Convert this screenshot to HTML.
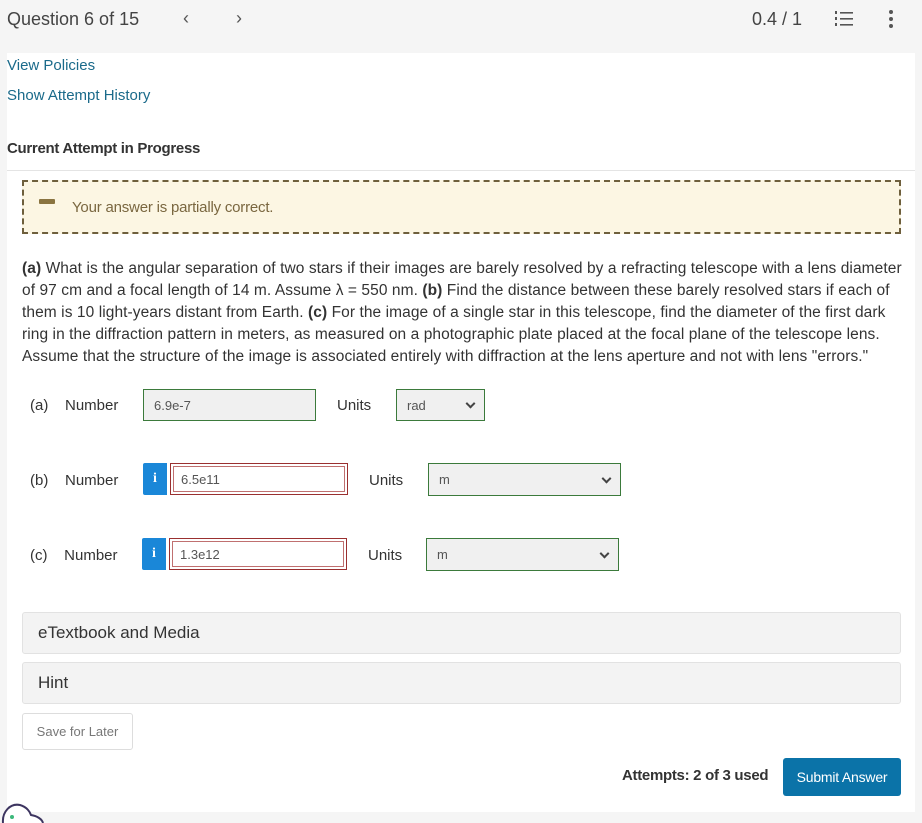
<!DOCTYPE html>
<html><head><meta charset="utf-8"><style>
*{box-sizing:border-box;margin:0;padding:0}
body{width:922px;height:823px;background:#f5f5f5;font-family:"Liberation Sans",sans-serif;color:#333;position:relative;overflow:hidden}
.top{position:absolute;left:0;top:0;width:922px;height:53px;background:#f5f5f5}
.main{position:absolute;left:7px;top:53px;width:908px;height:759px;background:#fff}
.abs{position:absolute;white-space:nowrap}
a{color:#1a6a8a}
.q{position:absolute;left:22px;top:258px;font-size:15.5px;line-height:22px;color:#333;letter-spacing:0.08px}
.q div{white-space:nowrap}
.box{position:absolute;border:1px solid #3b7a3b;background:#f0f0f0;font-size:13px;color:#555;padding-left:10px;display:flex;align-items:center}
.red{position:absolute;border:1px solid #9a3030;background:#fff;font-size:13px;color:#555;padding-left:10px;display:flex;align-items:center;box-shadow:inset 0 0 0 2px #fff,inset 0 0 0 3px #c07070}
.info{position:absolute;width:24px;height:32px;background:#1a87d8;color:#fff;font-weight:bold;font-family:"Liberation Serif",serif;font-size:14px;text-align:center;line-height:32px;border-radius:2px 0 0 2px}
.lbl{position:absolute;font-size:15px;color:#333;white-space:nowrap}
.acc{position:absolute;left:22px;width:879px;height:42px;background:#f3f3f3;border:1px solid #e2e2e2;border-radius:3px;font-size:17px;color:#333;padding:10px 0 0 15px}
.chev{position:absolute;right:10px;top:50%;width:7px;height:7px;border-right:2px solid #444;border-bottom:2px solid #444;transform:translateY(-70%) rotate(45deg)}
</style></head><body>
<div class="top">
<div class="abs" style="left:7px;top:9px;font-size:18px;color:#444">Question 6 of 15</div>
<div class="abs" style="left:183px;top:8px;font-size:18px;color:#555">&#8249;</div>
<div class="abs" style="left:236px;top:8px;font-size:18px;color:#555">&#8250;</div>
<div class="abs" style="left:752px;top:9px;font-size:18px;color:#444">0.4 / 1</div>
<svg class="abs" style="left:834px;top:10px" width="20" height="18"><g fill="#555"><rect x="6" y="2" width="13" height="1.6"/><rect x="6" y="8" width="13" height="1.6"/><rect x="6" y="14" width="13" height="1.6"/><rect x="1" y="1" width="2" height="3"/><rect x="1" y="7" width="2" height="3"/><rect x="1" y="13" width="2" height="3"/></g></svg>
<svg class="abs" style="left:887px;top:9px" width="8" height="20"><g fill="#555"><circle cx="4" cy="3" r="2"/><circle cx="4" cy="10" r="2"/><circle cx="4" cy="17" r="2"/></g></svg>
</div>
<div class="main"></div>
<div class="abs" style="left:7px;top:57px;font-size:15px"><a>View Policies</a></div>
<div class="abs" style="left:7px;top:87px;font-size:15px;color:#1a6a8a">Show Attempt History</div>
<div class="abs" style="left:7px;top:140px;font-size:15px;font-weight:bold;color:#333;letter-spacing:-0.3px">Current Attempt in Progress</div>
<div class="abs" style="left:7px;top:170px;width:908px;height:1px;background:#e4e4e4"></div>
<div class="abs" style="left:22px;top:180px;width:879px;height:54px;background:#fcf6e3;border:2px dashed #6e5f3c"></div>
<div class="abs" style="left:39px;top:199px;width:16px;height:5px;background:#8a7440;border-radius:1px"></div>
<div class="abs" style="left:72px;top:199px;font-size:15px;color:#7a6740;letter-spacing:-0.2px">Your answer is partially correct.</div>
<div class="q">
<div><b>(a)</b> What is the angular separation of two stars if their images are barely resolved by a refracting telescope with a lens diameter</div>
<div>of 97 cm and a focal length of 14 m. Assume λ = 550 nm. <b>(b)</b> Find the distance between these barely resolved stars if each of</div>
<div>them is 10 light-years distant from Earth. <b>(c)</b> For the image of a single star in this telescope, find the diameter of the first dark</div>
<div>ring in the diffraction pattern in meters, as measured on a photographic plate placed at the focal plane of the telescope lens.</div>
<div>Assume that the structure of the image is associated entirely with diffraction at the lens aperture and not with lens "errors."</div>
</div>
<div class="lbl" style="left:30px;top:397px">(a)&nbsp;&nbsp;&nbsp;&nbsp;Number</div>
<div class="box" style="left:143px;top:389px;width:173px;height:32px">6.9e-7</div>
<div class="lbl" style="left:337px;top:397px">Units</div>
<div class="box" style="left:396px;top:389px;width:89px;height:32px">rad<span class="chev"></span></div>
<div class="lbl" style="left:30px;top:472px">(b)&nbsp;&nbsp;&nbsp;&nbsp;Number</div>
<div class="info" style="left:143px;top:463px">i</div>
<div class="red" style="left:170px;top:463px;width:178px;height:32px">6.5e11</div>
<div class="lbl" style="left:369px;top:472px">Units</div>
<div class="box" style="left:428px;top:463px;width:193px;height:33px">m<span class="chev"></span></div>
<div class="lbl" style="left:30px;top:547px">(c)&nbsp;&nbsp;&nbsp;&nbsp;Number</div>
<div class="info" style="left:142px;top:538px">i</div>
<div class="red" style="left:169px;top:538px;width:178px;height:32px">1.3e12</div>
<div class="lbl" style="left:368px;top:547px">Units</div>
<div class="box" style="left:426px;top:538px;width:193px;height:33px">m<span class="chev"></span></div>
<div class="acc" style="top:612px">eTextbook and Media</div>
<div class="acc" style="top:662px">Hint</div>
<div class="abs" style="left:22px;top:713px;width:111px;height:37px;border:1px solid #ddd;border-radius:3px;background:#fff;font-size:13px;color:#777;text-align:center;line-height:36px">Save for Later</div>
<div class="abs" style="left:622px;top:767px;font-size:15px;font-weight:bold;color:#333;letter-spacing:-0.3px">Attempts: 2 of 3 used</div>
<div class="abs" style="left:783px;top:758px;width:118px;height:38px;background:#0b73a8;border-radius:3px;color:#fff;font-size:14px;text-align:center;line-height:38px;letter-spacing:-0.2px">Submit Answer</div>
<svg class="abs" style="left:0;top:800px" width="45" height="23"><path d="M3 23 C2 12 10 3 20 5 C27 7 30 12 31 15 C37 16 42 19 43 23" fill="#fff" stroke="#3d3560" stroke-width="2"/><circle cx="12" cy="17" r="2" fill="#3cb87a"/></svg>
</body></html>
